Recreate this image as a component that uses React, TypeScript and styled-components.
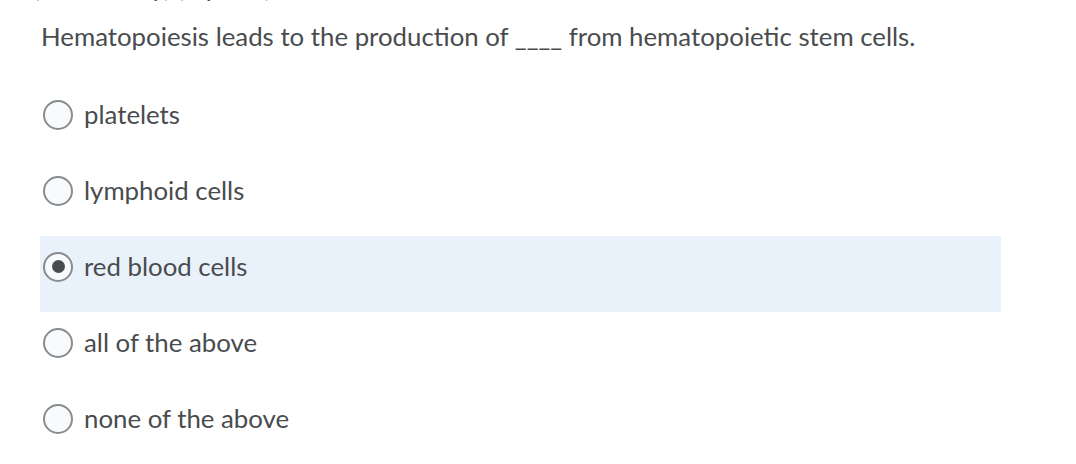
import React, { useState } from "react";
import styled, { createGlobalStyle } from "styled-components";

const GlobalStyle = createGlobalStyle`
  html, body {
    margin: 0;
    padding: 0;
    background: #ffffff;
  }
  body {
    font-family: Lato, "Noto Sans", "Liberation Sans", sans-serif;
    color: #494c4e;
  }
`;

const Page = styled.div`
  width: 1076px;
  height: 464px;
  overflow: hidden;
  box-sizing: border-box;
  padding-left: 40px;
`;

const Header = styled.div`
  font-size: 25.8px;
  line-height: 31px;
  margin-top: -28.5px;
  margin-left: -7px;
  white-space: nowrap;
`;

const Question = styled.p`
  margin: 18.5px 0 0 1px;
  font-size: 25.8px;
  line-height: 31px;
  white-space: nowrap;
`;

const Options = styled.div`
  margin-top: 32px;
  width: 961px;
  display: flex;
  flex-direction: column;
`;

const Row = styled.label<{ $selected: boolean }>`
  display: flex;
  align-items: center;
  gap: 11px;
  height: 76px;
  box-sizing: border-box;
  padding: 16px 0 32px 3px;
  background: ${(p) => (p.$selected ? "#e9f1fb" : "transparent")};
  cursor: pointer;
`;

const Radio = styled.input`
  appearance: none;
  margin: 1px 0 0;
  width: 30px;
  height: 30px;
  border-radius: 50%;
  border: 2px solid #878c8f;
  background: #f9fafc;
  box-sizing: border-box;
  display: grid;
  place-items: center;
  flex-shrink: 0;

  &:checked::after {
    content: "";
    width: 13px;
    height: 13px;
    border-radius: 50%;
    background: #494c4e;
  }
`;

const OptionText = styled.span`
  font-size: 25.8px;
  line-height: 31px;
`;

const choices = [
  "platelets",
  "lymphoid cells",
  "red blood cells",
  "all of the above",
  "none of the above",
];

export default function App() {
  const [picked, setPicked] = useState(2);

  return (
    <>
      <GlobalStyle />
      <Page>
        <Header>(Mandatory) (1 point)</Header>
        <Question>
          Hematopoiesis leads to the production of ____ from hematopoietic stem
          cells.
        </Question>
        <Options>
          {choices.map((c, i) => (
            <Row key={c} $selected={picked === i}>
              <Radio
                type="radio"
                name="q1"
                checked={picked === i}
                onChange={() => setPicked(i)}
              />
              <OptionText>{c}</OptionText>
            </Row>
          ))}
        </Options>
      </Page>
    </>
  );
}
